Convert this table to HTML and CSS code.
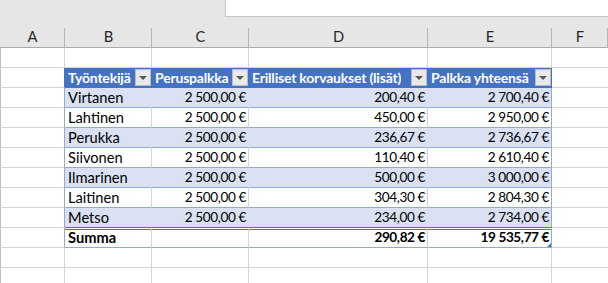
FILE: index.html
```html
<!DOCTYPE html>
<html lang="fi">
<head>
<meta charset="utf-8">
<title>Palkat</title>
<link rel="stylesheet" href="styles.css">
</head>
<body>
<div class="sheet">
  <div class="topbar"><div class="namebox"></div></div>

  <div class="row colhead">
    <div class="c">A</div><div class="c">B</div><div class="c">C</div><div class="c">D</div><div class="c">E</div><div class="c">F</div>
  </div>

  <div class="row">
    <div class="c a"></div><div class="c"></div><div class="c"></div><div class="c"></div><div class="c"></div><div class="c f"></div>
  </div>

  <div class="row thead">
    <div class="c a"></div>
    <div class="c t"><span class="lbl">Työntekijä</span><span class="fbtn"><i></i></span></div>
    <div class="c t"><span class="lbl">Peruspalkka</span><span class="fbtn"><i></i></span></div>
    <div class="c t"><span class="lbl">Erilliset korvaukset (lisät)</span><span class="fbtn"><i></i></span></div>
    <div class="c t e"><span class="lbl">Palkka yhteensä</span><span class="fbtn"><i></i></span></div>
    <div class="c f"></div>
  </div>

  <div class="row band">
    <div class="c a"></div><div class="c t">Virtanen</div><div class="c t n">2 500,00 €</div><div class="c t n">200,40 €</div><div class="c t n e">2 700,40 €</div><div class="c f"></div>
  </div>
  <div class="row plain">
    <div class="c a"></div><div class="c t">Lahtinen</div><div class="c t n">2 500,00 €</div><div class="c t n">450,00 €</div><div class="c t n e">2 950,00 €</div><div class="c f"></div>
  </div>
  <div class="row band">
    <div class="c a"></div><div class="c t">Perukka</div><div class="c t n">2 500,00 €</div><div class="c t n">236,67 €</div><div class="c t n e">2 736,67 €</div><div class="c f"></div>
  </div>
  <div class="row plain">
    <div class="c a"></div><div class="c t">Siivonen</div><div class="c t n">2 500,00 €</div><div class="c t n">110,40 €</div><div class="c t n e">2 610,40 €</div><div class="c f"></div>
  </div>
  <div class="row band">
    <div class="c a"></div><div class="c t">Ilmarinen</div><div class="c t n">2 500,00 €</div><div class="c t n">500,00 €</div><div class="c t n e">3 000,00 €</div><div class="c f"></div>
  </div>
  <div class="row plain">
    <div class="c a"></div><div class="c t">Laitinen</div><div class="c t n">2 500,00 €</div><div class="c t n">304,30 €</div><div class="c t n e">2 804,30 €</div><div class="c f"></div>
  </div>
  <div class="row band last">
    <div class="c a"></div><div class="c t">Metso</div><div class="c t n">2 500,00 €</div><div class="c t n">234,00 €</div><div class="c t n e">2 734,00 €</div><div class="c f"></div>
  </div>
  <div class="row total">
    <div class="c a"></div><div class="c t">Summa</div><div class="c t n"></div><div class="c t n">290,82 €</div><div class="c t n e">19 535,77 €<span class="handle"></span></div><div class="c f"></div>
  </div>

  <div class="row">
    <div class="c a"></div><div class="c"></div><div class="c"></div><div class="c"></div><div class="c"></div><div class="c f"></div>
  </div>
  <div class="row">
    <div class="c a"></div><div class="c"></div><div class="c"></div><div class="c"></div><div class="c"></div><div class="c f"></div>
  </div>
</div>
</body>
</html>
```
FILE: styles.css
```css
html, body {
  margin: 0;
  padding: 0;
  background: #ffffff;
}
body {
  font-family: Lato, "Liberation Sans", sans-serif;
  font-size: 14.67px;
  color: #000000;
  overflow: hidden;
}
.sheet {
  width: 608px;
  height: 283px;
  overflow: hidden;
}
.topbar {
  height: 28px;
  background: #e6e6e6;
  display: flex;
  justify-content: flex-end;
  align-items: flex-start;
}
.namebox {
  width: 383px;
  height: 17px;
  box-sizing: border-box;
  background: #ffffff;
  border-left: 1px solid #c6c6c6;
  border-bottom: 1px solid #c6c6c6;
}
.row {
  display: grid;
  grid-template-columns: 65px 87px 97px 179px 124px 1fr;
  height: 20px;
}
.c {
  box-sizing: border-box;
  border-right: 1px solid #d4d4d4;
  border-bottom: 1px solid #d4d4d4;
  padding: 0 2px 0 3px;
  line-height: 19px;
  white-space: nowrap;
  overflow: hidden;
  position: relative;
}
.c.a {
  border-left: 1px solid #bfbfbf;
}
.c.f {
  border-right: none;
}
.n {
  text-align: right;
  font-size: 13.6px;
  letter-spacing: -0.4px;
  padding-right: 2px;
}

/* column header */
.colhead {
  background: #e6e6e6;
  color: #262626;
}
.colhead .c {
  text-align: center;
  border-right-color: #b4b4b4;
  border-bottom-color: #ababab;
  line-height: 17px;
}

/* table header */
.thead .c.a { border-right-color: #4472c4; }
.thead .c.t {
  background: #4472c4;
  color: #ffffff;
  font-weight: bold;
  font-size: 14px;
  letter-spacing: -0.2px;
  border-right-color: #4472c4;
  border-bottom-color: #4472c4;
  display: flex;
  align-items: center;
  justify-content: space-between;
  padding-right: 0;
}
.thead .c.e { border-right-color: #4472c4; }
.lbl {
  overflow: hidden;
  white-space: nowrap;
}
.fbtn {
  flex: none;
  width: 16px;
  height: 17px;
  box-sizing: border-box;
  background: #e9e9e9;
  border: 1px solid #bcbcbc;
  display: flex;
  align-items: center;
  justify-content: center;
  margin-left: 1px;
}
.fbtn i {
  display: block;
  width: 0;
  height: 0;
  border-left: 4px solid transparent;
  border-right: 4px solid transparent;
  border-top: 4px solid #595959;
  margin-top: 1px;
}

/* body rows */
.band .c.a, .plain .c.a, .total .c.a, .last .c.a { border-right-color: #8ea9db; }
.band .c.t {
  background: #d9e1f2;
  border-right-color: #d9e1f2;
  border-bottom-color: #8ea9db;
}
.plain .c.t {
  border-bottom-color: #8ea9db;
}
.band .c.e, .plain .c.e { border-right-color: #8ea9db; }

.last { height: 19px; }
.last .c { border-bottom: none; line-height: 19px; }

.total { height: 21px; }
.total .c.a, .total .c.f {
  border-top: 1px solid #d4d4d4;
}
.total .c.t {
  font-weight: bold;
  border-top: 3px double #4472c4;
  border-bottom-color: #8ea9db;
  line-height: 15px;
}
.total .c.e { border-right-color: #8ea9db; }
.handle {
  position: absolute;
  right: 0;
  bottom: 0;
  width: 0;
  height: 0;
  border-left: 4px solid transparent;
  border-bottom: 4px solid #4472c4;
}
```
